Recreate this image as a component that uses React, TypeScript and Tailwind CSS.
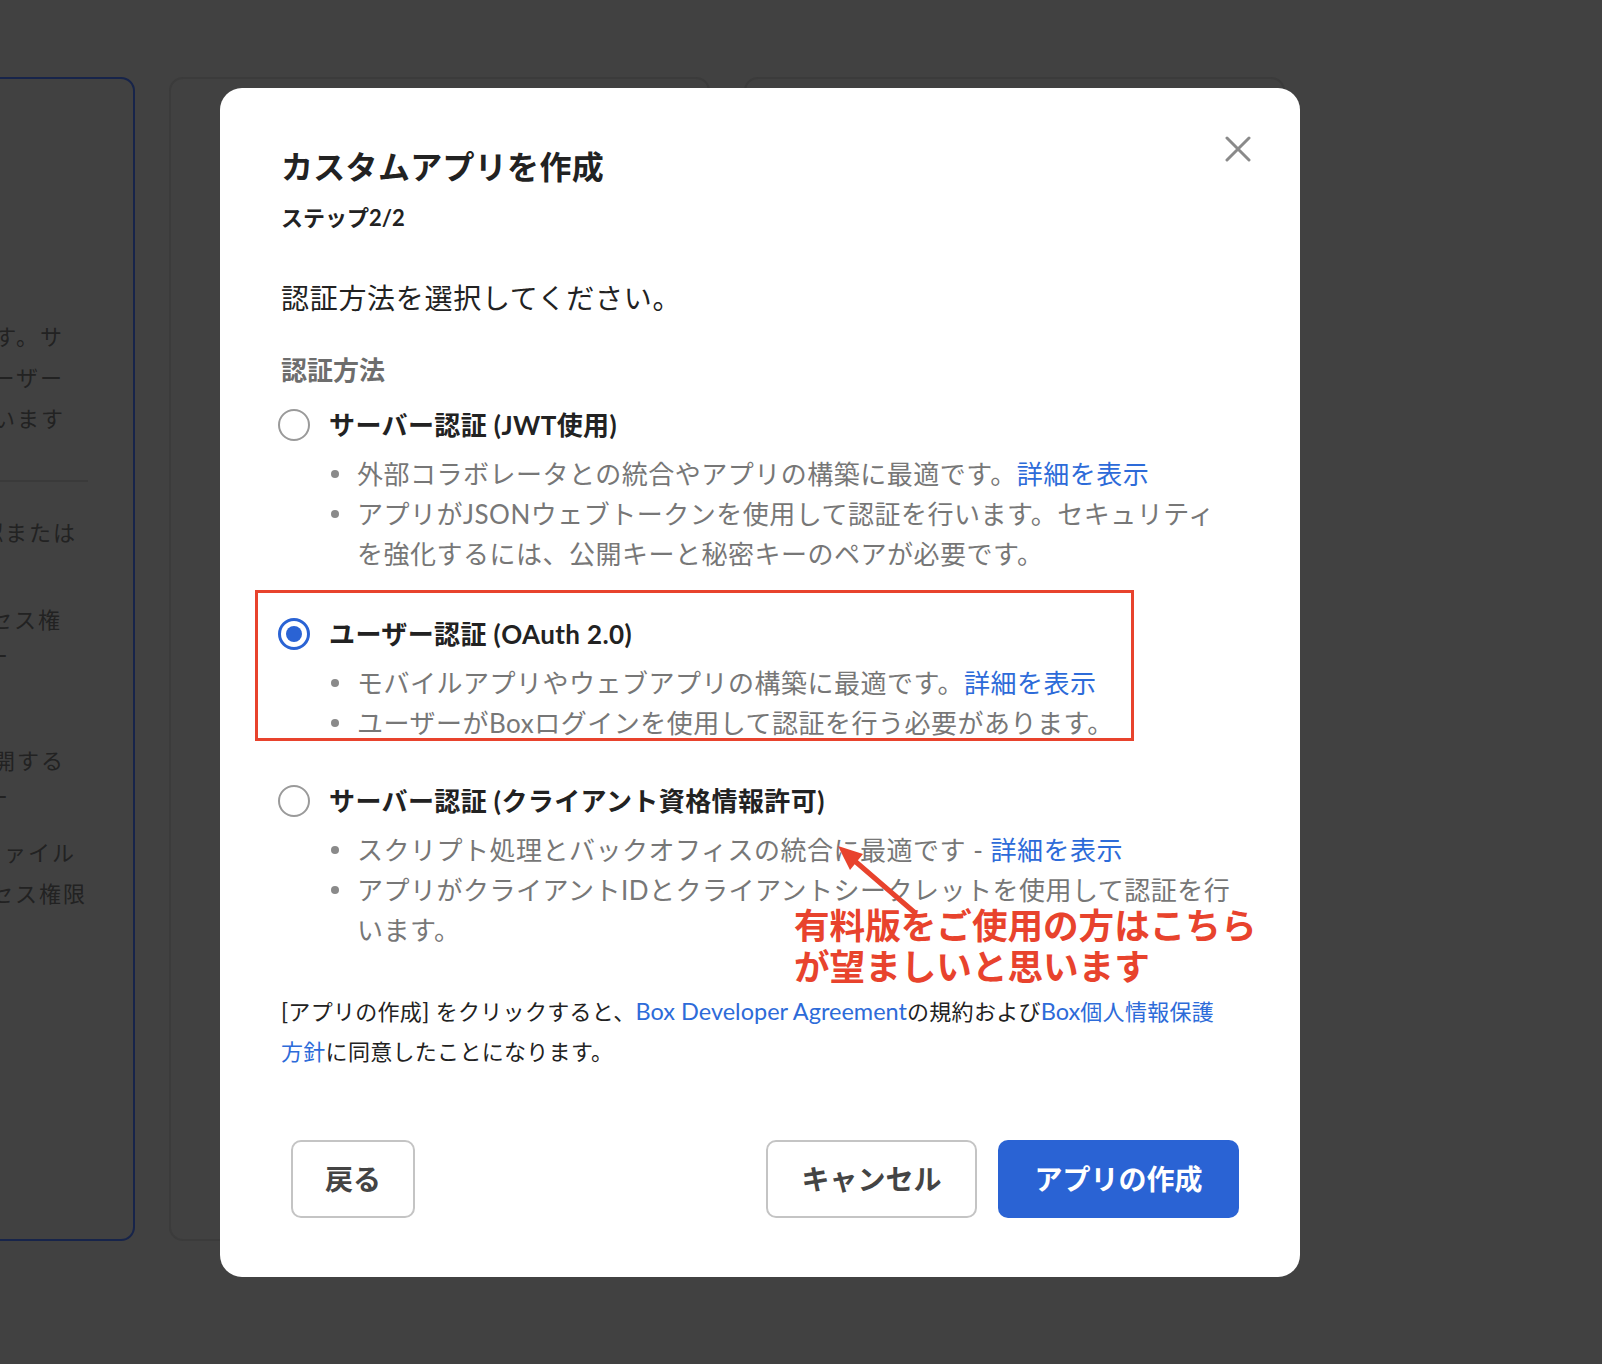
import React from "react";

const font = { fontFamily: 'Lato, "Noto Sans CJK JP", sans-serif' };

function Radio({ checked }: { checked?: boolean }) {
  return checked ? (
    <span className="w-[32px] h-[32px] shrink-0 rounded-full border-[3px] border-[#2a63d4] flex items-center justify-center">
      <span className="w-[16px] h-[16px] rounded-full bg-[#2a63d4]" />
    </span>
  ) : (
    <span className="w-[32px] h-[32px] shrink-0 rounded-full border-2 border-[#9a9a9a]" />
  );
}

function Bullet({ children }: { children: React.ReactNode }) {
  return (
    <li className="flex">
      <span className="pt-[16px] shrink-0">
        <span className="block w-[8px] h-[8px] rounded-full bg-[#8a8a8a]" />
      </span>
      <span className="ml-[18px] whitespace-nowrap">{children}</span>
    </li>
  );
}

function Link({ children }: { children: React.ReactNode }) {
  return <span className="text-[#2d6bd9]">{children}</span>;
}

function Option({ title, checked, children }: { title: string; checked?: boolean; children: React.ReactNode }) {
  return (
    <div>
      <div className="flex items-center gap-[19px] h-[36px]">
        <Radio checked={checked} />
        <span className="text-[26px] font-bold tracking-[0.4px] text-[#222] leading-[36px]">{title}</span>
      </div>
      <ul className="mt-[11px] pl-[53px] text-[26px] leading-[40px] tracking-[0.5px] text-[#777]">{children}</ul>
    </div>
  );
}

export default function App() {
  return (
    <div className="relative w-[1602px] h-[1364px] overflow-hidden bg-[#414141]" style={font}>
      {/* dimmed page behind the dialog */}
      <div className="flex gap-[34px] pt-[77px] ml-[-406px]">
        <div className="w-[541px] h-[1164px] rounded-[14px] border-2 border-[#17244a] text-[22px] tracking-[2px] text-[#222]">
          <div className="mt-[237px] leading-[41px]">
            <div className="w-[468px] text-right whitespace-nowrap">ユーザーの認証が必要です。サ</div>
            <div className="w-[468px] text-right whitespace-nowrap">ービスアカウントとユーザー</div>
            <div className="w-[469px] text-right whitespace-nowrap">を使用してアクセスを行います</div>
          </div>
          <div className="mt-[41px] w-[492px] h-[2px] bg-[#3a3a3a]" />
          <div className="mt-[30px] leading-[41px] w-[481px] text-right whitespace-nowrap">管理コンソールで承認または</div>
          <div className="mt-[49px] leading-[36px]">
            <div className="w-[466px] text-right whitespace-nowrap">すべてのファイルへのアクセス権</div>
            <div className="w-[414px] text-right whitespace-nowrap">ー</div>
          </div>
          <div className="mt-[69px] leading-[36px]">
            <div className="w-[469px] text-right whitespace-nowrap">ウェブアプリとして公開する</div>
            <div className="w-[414px] text-right whitespace-nowrap">ー</div>
          </div>
          <div className="mt-[17px] leading-[41px]">
            <div className="w-[480px] text-right whitespace-nowrap">ユーザーのすべてのファイル</div>
            <div className="w-[491px] text-right whitespace-nowrap">とフォルダへのアクセス権限</div>
          </div>
        </div>
        <div className="w-[541px] h-[1164px] rounded-[14px] border-2 border-[#3b3b3b]" />
        <div className="w-[541px] h-[1164px] rounded-[14px] border-2 border-[#3b3b3b]" />
      </div>

      {/* dialog */}
      <div className="absolute left-[220px] top-[88px] w-[1080px] h-[1189px] rounded-[22px] bg-white px-[61px] pt-[59px]">
        <button className="absolute top-[35px] right-[36px] w-[52px] h-[52px] flex items-center justify-center">
          <svg width="26" height="26" viewBox="0 0 26 26" fill="none" stroke="#8a8a8a" strokeWidth="3" strokeLinecap="round">
            <path d="M2 2 L24 24 M24 2 L2 24" />
          </svg>
        </button>

        <h1 className="text-[32px] font-bold tracking-[0.3px] leading-[40px] text-[#222]">カスタムアプリを作成</h1>
        <div className="mt-[17px] text-[22px] font-bold leading-[28px] text-[#222]">ステップ2/2</div>
        <p className="mt-[48px] text-[28px] tracking-[0.7px] leading-[36px] text-[#222]">認証方法を選択してください。</p>
        <div className="mt-[36px] text-[26px] font-bold leading-[36px] text-[#6d6d6d]">認証方法</div>

        <div className="mt-[19px] ml-[-3px]">
          <Option title="サーバー認証 (JWT使用)">
            <Bullet>
              外部コラボレータとの統合やアプリの構築に最適です。<Link>詳細を表示</Link>
            </Bullet>
            <Bullet>
              アプリがJSONウェブトークンを使用して認証を行います。セキュリティ
              <br />
              を強化するには、公開キーと秘密キーのペアが必要です。
            </Bullet>
          </Option>
        </div>

        <div className="mt-[16px] ml-[-26px] w-[879px] h-[151px] border-[3px] border-[#e8432d] pl-[20px] pt-[23px]">
          <Option title="ユーザー認証 (OAuth 2.0)" checked>
            <Bullet>
              モバイルアプリやウェブアプリの構築に最適です。<Link>詳細を表示</Link>
            </Bullet>
            <Bullet>ユーザーがBoxログインを使用して認証を行う必要があります。</Bullet>
          </Option>
        </div>

        <div className="mt-[42px] ml-[-3px]">
          <Option title="サーバー認証 (クライアント資格情報許可)">
            <Bullet>
              スクリプト処理とバックオフィスの統合に最適です - <Link>詳細を表示</Link>
            </Bullet>
            <Bullet>
              アプリがクライアントIDとクライアントシークレットを使用して認証を行
              <br />
              います。
            </Bullet>
          </Option>
        </div>

        <p className="mt-[41px] text-[22px] tracking-[0.3px] leading-[40px] text-[#222] whitespace-nowrap">
          <span className="text-[23px]">[</span>アプリの作成<span className="text-[23px]">] </span>をクリックすると、
          <Link>
            <span className="text-[23.5px] tracking-normal">Box Developer Agreement</span>
          </Link>
          の規約および
          <Link>
            <span className="text-[23.5px] tracking-normal">Box</span>個人情報保護
          </Link>
          <br />
          <Link>方針</Link>に同意したことになります。
        </p>

        <div className="mt-[68px] flex items-center">
          <button className="ml-[10px] w-[124px] h-[78px] rounded-[10px] border-2 border-[#c4c4c4] text-[28px] font-bold text-[#444]">
            戻る
          </button>
          <div className="ml-auto flex gap-[21px]">
            <button className="w-[211px] h-[78px] rounded-[10px] border-2 border-[#c4c4c4] text-[28px] font-bold text-[#444]">
              キャンセル
            </button>
            <button className="w-[241px] h-[78px] rounded-[10px] bg-[#2a63d4] text-[28px] font-bold text-white">
              アプリの作成
            </button>
          </div>
        </div>

        {/* annotation */}
        <svg className="absolute left-0 top-0 pointer-events-none" width="1080" height="1189" viewBox="0 0 1080 1189">
          <line x1="694" y1="824" x2="636" y2="774" stroke="#e8432d" strokeWidth="5" strokeLinecap="round" />
          <polygon points="618,758 643,766 630,782" fill="#e8432d" />
        </svg>
        <div className="absolute left-[574px] top-[817px] text-[35.6px] font-bold leading-[41px] text-[#e8432d] whitespace-nowrap">
          有料版をご使用の方はこちら
          <br />
          が望ましいと思います
        </div>
      </div>
    </div>
  );
}
